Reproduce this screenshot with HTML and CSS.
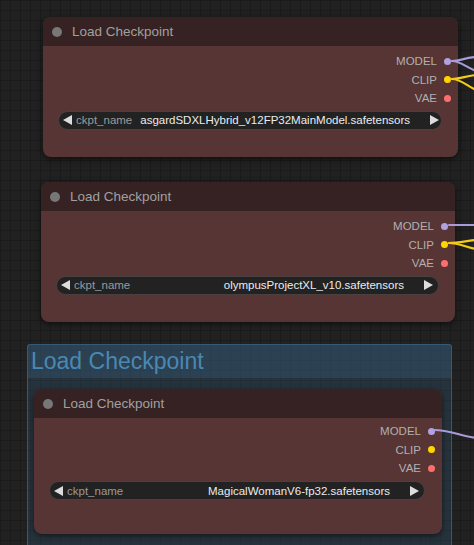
FILE: index.html
```html
<!DOCTYPE html>
<html>
<head>
<meta charset="utf-8">
<link rel="stylesheet" href="styles.css">
</head>
<body>
<div class="canvas">
  <div class="node n1">
    <div class="title"><span class="tdot"></span><span class="tname">Load Checkpoint</span></div>
    <div class="outputs">
      <div class="out"><span>MODEL</span><i class="dot model"></i></div>
      <div class="out"><span>CLIP</span><i class="dot clip"></i></div>
      <div class="out"><span>VAE</span><i class="dot vae"></i></div>
    </div>
    <div class="widget">
      <span class="arrow left"></span>
      <span class="wlabel">ckpt_name</span>
      <span class="wvalue">asgardSDXLHybrid_v12FP32MainModel.safetensors</span>
      <span class="arrow right"></span>
    </div>
  </div>

  <div class="node n2">
    <div class="title"><span class="tdot"></span><span class="tname">Load Checkpoint</span></div>
    <div class="outputs">
      <div class="out"><span>MODEL</span><i class="dot model"></i></div>
      <div class="out"><span>CLIP</span><i class="dot clip"></i></div>
      <div class="out"><span>VAE</span><i class="dot vae"></i></div>
    </div>
    <div class="widget">
      <span class="arrow left"></span>
      <span class="wlabel">ckpt_name</span>
      <span class="wvalue">olympusProjectXL_v10.safetensors</span>
      <span class="arrow right"></span>
    </div>
  </div>

  <div class="group">
    <div class="gtitle">Load Checkpoint</div>
    <div class="node n3">
      <div class="title"><span class="tdot"></span><span class="tname">Load Checkpoint</span></div>
      <div class="outputs">
        <div class="out"><span>MODEL</span><i class="dot model"></i></div>
        <div class="out"><span>CLIP</span><i class="dot clip"></i></div>
        <div class="out"><span>VAE</span><i class="dot vae"></i></div>
      </div>
      <div class="widget">
        <span class="arrow left"></span>
        <span class="wlabel">ckpt_name</span>
        <span class="wvalue">MagicalWomanV6-fp32.safetensors</span>
        <span class="arrow right"></span>
      </div>
    </div>
  </div>

  <svg class="links" width="474" height="545" viewBox="0 0 474 545">
    <g fill="none" stroke-width="2.2" stroke-linecap="round">
      <path d="M452 61 C460 61 464 58 476 57" stroke="#a99ad8"/>
      <path d="M452 61 C460 61 466 67 476 71" stroke="#a99ad8"/>
      <path d="M452 79 C460 79 466 76 476 75" stroke="#f2cd18"/>
      <path d="M452 79 C460 79 466 85 476 90" stroke="#f2cd18"/>
      <path d="M449 225 L476 225" stroke="#a99ad8"/>
      <path d="M449 243 C458 243 466 241 476 240" stroke="#f2cd18"/>
      <path d="M449 243 C458 243 466 247 476 249" stroke="#f2cd18"/>
      <path d="M434 430 C450 430 460 436 476 438" stroke="#a99ad8"/>
    </g>
  </svg>
</div>
</body>
</html>
```
FILE: styles.css
```css
* { box-sizing: border-box; }
html, body { margin: 0; padding: 0; }
body {
  width: 474px;
  height: 545px;
  overflow: hidden;
  background: #202020;
  font-family: "Liberation Sans", Arial, sans-serif;
}
.canvas {
  position: relative;
  width: 474px;
  height: 545px;
  overflow: hidden;
  background-color: #212121;
  background-image:
    linear-gradient(rgba(0,0,0,0.18) 1px, transparent 1px),
    linear-gradient(90deg, rgba(0,0,0,0.18) 1px, transparent 1px);
  background-size: 10px 10px;
}
.links {
  position: absolute;
  left: 0;
  top: 0;
  pointer-events: none;
}
.node {
  position: absolute;
  display: flex;
  flex-direction: column;
  background: #573535;
  border-radius: 8px;
  box-shadow: 0 2px 6px rgba(0,0,0,0.55);
}
.n1 { left: 43px; top: 17px; width: 415px; height: 140px; }
.n2 { left: 41px; top: 182px; width: 414px; height: 140px; }
.n3 { left: 6px; top: 44px; width: 408px; height: 145px; }

.title {
  height: 29px;
  flex: none;
  display: flex;
  align-items: center;
  padding-left: 9px;
  gap: 10px;
  background: #362222;
  border-radius: 8px 8px 0 0;
}
.tdot {
  width: 10px;
  height: 10px;
  border-radius: 50%;
  background: #777;
}
.tname {
  color: #a0a0a0;
  font-size: 13.5px;
}
.outputs {
  display: flex;
  flex-direction: column;
  align-items: flex-end;
  padding: 6px 7px 0 0;
}
.n3 .outputs { padding-top: 4px; }
.out {
  height: 18.5px;
  display: flex;
  align-items: center;
  gap: 7px;
  font-size: 11.5px;
  color: #b0b0b0;
}
.dot {
  display: block;
  width: 7px;
  height: 7px;
  border-radius: 50%;
}
.dot.model { background: #b0a1e0; }
.dot.clip { background: #ffd500; }
.dot.vae { background: #ff6e6e; }

.widget {
  margin: 3px 16px 0 15px;
  height: 19px;
  display: flex;
  align-items: center;
  padding: 0 5px 0 4px;
  background: #222;
  border: 1px solid #4a4040;
  border-radius: 10px;
  font-size: 11.5px;
  white-space: nowrap;
  overflow: hidden;
}
.n3 .widget { margin-top: 3.5px; margin-right: 17px; }
.arrow {
  flex: none;
  width: 0;
  height: 0;
  border-top: 5px solid transparent;
  border-bottom: 5px solid transparent;
}
.arrow.left { border-right: 9px solid #ddd; }
.arrow.right { border-left: 9px solid #ddd; margin-left: 20px; }
.wlabel {
  margin-left: 4px;
  color: #9a9a9a;
}
.wvalue {
  margin-left: auto;
  padding-left: 8px;
  color: #ececec;
}

.group {
  position: absolute;
  left: 27px;
  top: 344px;
  width: 425px;
  height: 210px;
  background: rgba(63,120,158,0.22);
  border: 1px solid rgba(70,130,170,0.5);
  border-radius: 3px;
}
.gtitle {
  height: 33px;
  padding-left: 3px;
  display: flex;
  align-items: center;
  font-size: 23px;
  color: #4a88b4;
  background: rgba(63,120,158,0.22);
}
```
